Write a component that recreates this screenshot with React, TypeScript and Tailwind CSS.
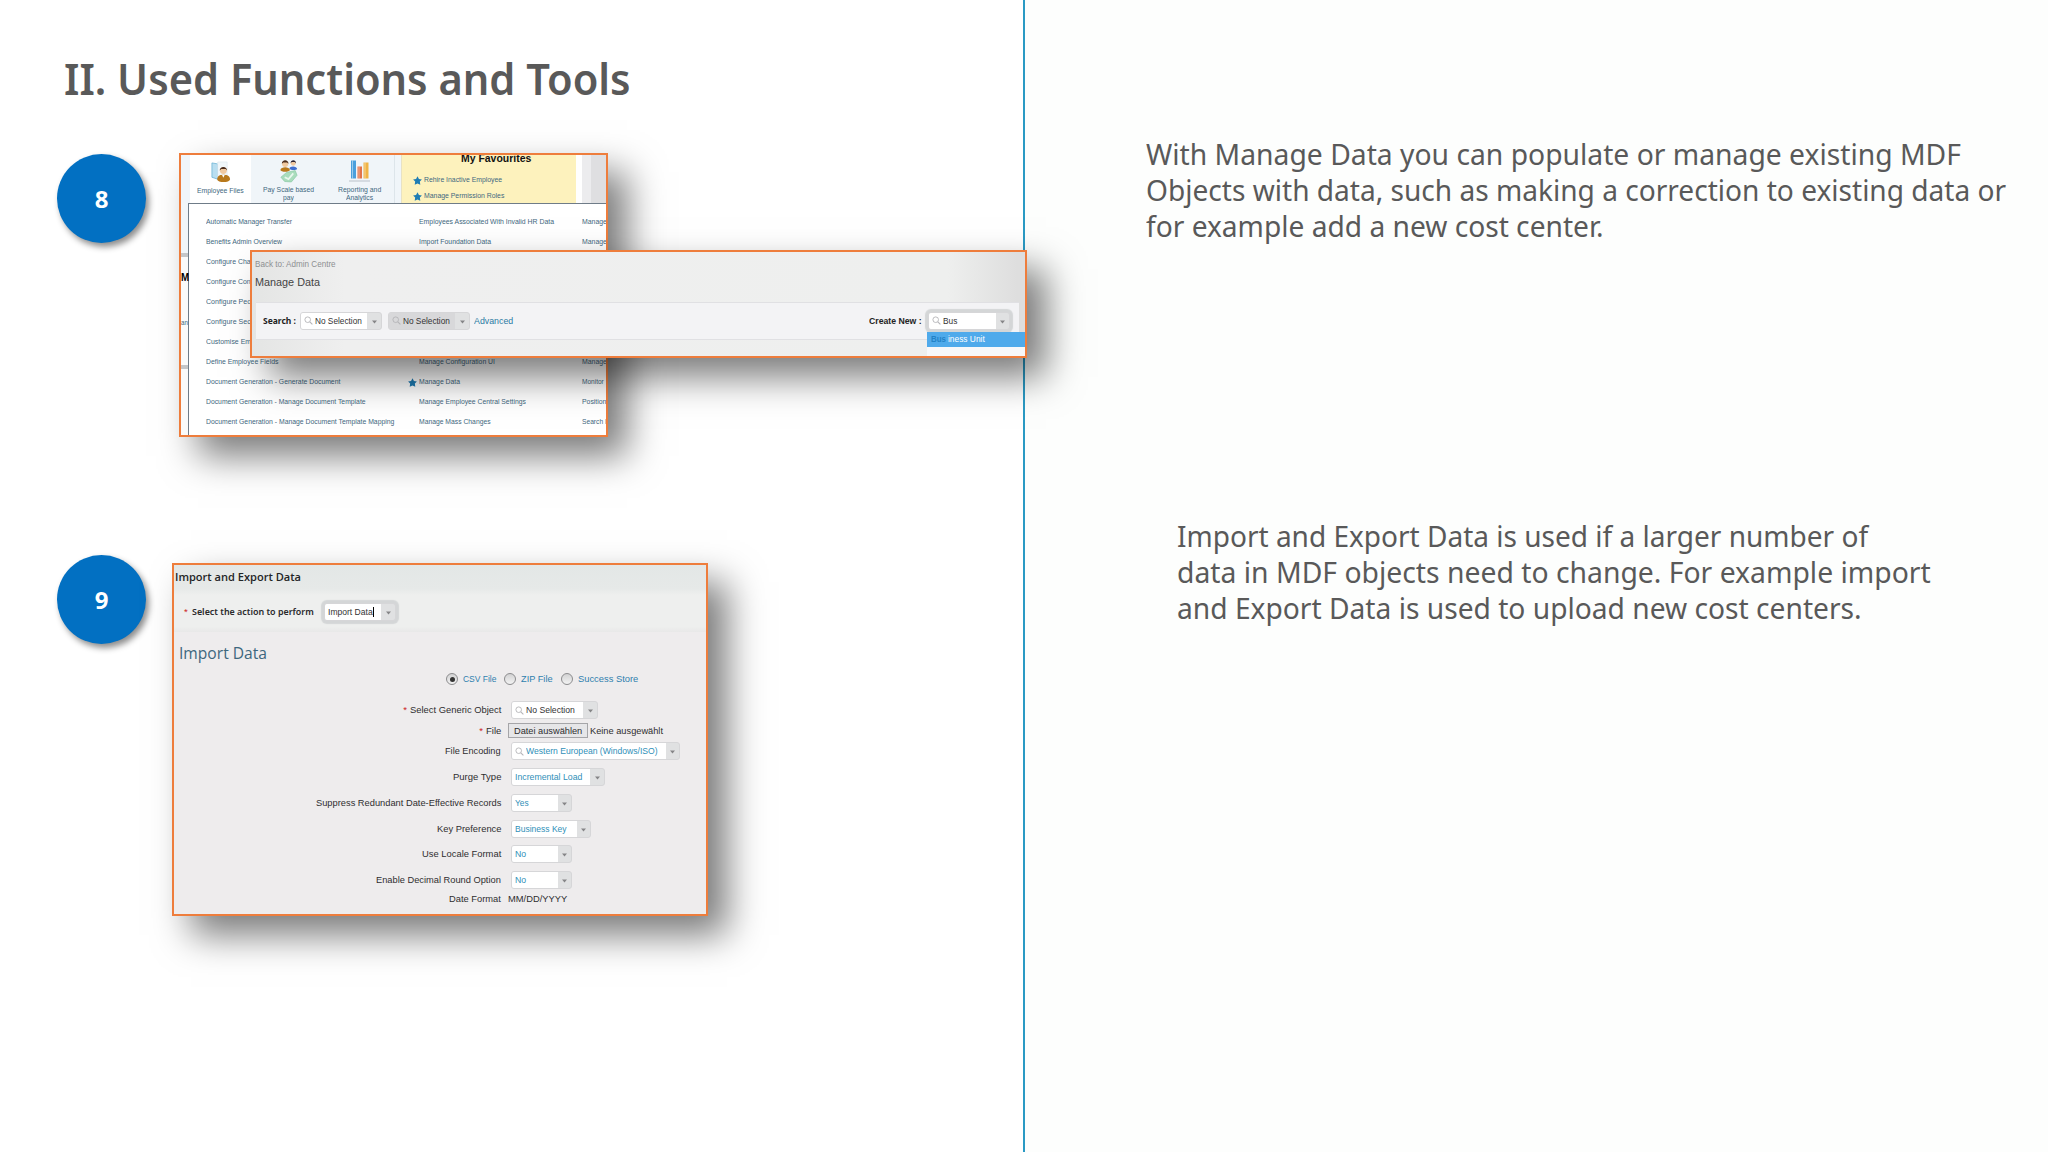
import { useLayoutEffect, useRef, useState, type ReactNode } from "react";
import { clsx } from "clsx";

/* One line of text whose glyphs are condensed or widened to fill w pixels. */
function Fit({ w, className, children }: { w: number; className?: string; children: ReactNode }) {
  const ref = useRef<HTMLSpanElement>(null);
  const [scale, setScale] = useState(1);
  useLayoutEffect(() => {
    if (ref.current) setScale(w / ref.current.offsetWidth);
  }, [w]);
  return (
    <span className={clsx("block shrink-0 whitespace-nowrap", className)} style={{ width: w }}>
      <span ref={ref} className="inline-block origin-left" style={{ transform: `scaleX(${scale})` }}>
        {children}
      </span>
    </span>
  );
}

const SHADOW = "shadow-[19px_19px_35px_rgba(0,0,0,0.52)]";

function Star({ className }: { className?: string }) {
  return (
    <svg viewBox="0 0 10 10" className={clsx("h-[9px] w-[9px] shrink-0", className)}>
      <path d="M5 .2 6.6 3.2 9.9 3.8 7.6 6.2 8.1 9.8 5 8.3 1.9 9.8 2.4 6.2.1 3.8 3.4 3.2Z" fill="#1f7db4" />
    </svg>
  );
}

function Magnifier() {
  return (
    <svg viewBox="0 0 9 9" className="h-[9px] w-[9px] shrink-0" fill="none" stroke="#b4b4b8">
      <circle cx="3.7" cy="3.7" r="2.8" strokeWidth=".9" />
      <path d="M5.8 5.8 8.4 8.4" strokeWidth="1.1" />
    </svg>
  );
}

function Badge({ n, className }: { n: string; className: string }) {
  return (
    <div
      className={clsx(
        "absolute left-[57px] flex h-[89px] w-[89px] items-center justify-center rounded-full bg-[#0270c2] text-[24px] font-bold text-white shadow-[3px_4px_6px_rgba(0,0,0,0.45)]",
        className,
      )}
    >
      {n}
    </div>
  );
}

function Select({
  text, textW, search, width, fieldW, gray, glow, color = "text-[#2f8fb8]", caret,
}: {
  text: string; textW: number; search?: boolean; width: number; fieldW: number;
  gray?: boolean; glow?: boolean; color?: string; caret?: boolean;
}) {
  return (
    <div
      className={clsx(
        "flex h-[18px] shrink-0 items-stretch overflow-hidden rounded-[3px] border border-[#d6d6d8] bg-[#e0e1e2]",
        glow && "shadow-[0_0_1px_3px_#d4d6d7]",
      )}
      style={{ width }}
    >
      <div
        className={clsx("flex items-center", search ? "gap-[2px] pl-[3px]" : "pl-[3px]", gray ? "bg-[#d8d8da]" : "bg-white")}
        style={{ width: fieldW }}
      >
        {search && <Magnifier />}
        <Fit w={textW} className={color}>{text}</Fit>
        {caret && <span className="h-[10px] w-px bg-black" />}
      </div>
      <div className="flex flex-1 items-center justify-center">
        <svg viewBox="0 0 6 4" className="mt-[2px] h-[4px] w-[5px]"><path d="M0 .3H6L3 3.8Z" fill="#858587" /></svg>
      </div>
    </div>
  );
}

type Cell = [string, number];
const MENU: { a: Cell; b?: Cell; star?: boolean; c?: Cell }[] = [
  { a: ["Automatic Manager Transfer", 86], b: ["Employees Associated With Invalid HR Data", 135], c: ["Manage", 25] },
  { a: ["Benefits Admin Overview", 76], b: ["Import Foundation Data", 72], c: ["Manage", 25] },
  { a: ["Configure Cha", 45] },
  { a: ["Configure Con", 45] },
  { a: ["Configure Peo", 45] },
  { a: ["Configure Sec", 45] },
  { a: ["Customise Em", 45] },
  { a: ["Define Employee Fields", 72], b: ["Manage Configuration UI", 76], c: ["Manage", 25] },
  { a: ["Document Generation - Generate Document", 134], b: ["Manage Data", 41], star: true, c: ["Monitor", 22] },
  { a: ["Document Generation - Manage Document Template", 160], b: ["Manage Employee Central Settings", 107], c: ["Position", 24] },
  { a: ["Document Generation - Manage Document Template Mapping", 188], b: ["Manage Mass Changes", 72], c: ["Search I", 25] },
];

function AdminPanel() {
  return (
    <div className={clsx("absolute left-[179px] top-[153px] h-[284px] w-[429px] bg-white", SHADOW)}>
      <div className="flex h-full flex-col overflow-hidden border-2 border-[#ee7d3c] font-['Liberation_Sans',sans-serif] text-[8px] leading-[10px] text-[#3f6880]">
        <div className="flex h-[48px] shrink-0 bg-[#f0f5f9]">
          <div className="ml-[9px] flex w-[61px] flex-col items-center bg-white pt-[6px]">
            <svg viewBox="0 0 22 23" className="h-[22px] w-[21px]">
              <path d="M2 2 8 3V19L2 17Z" fill="#b9def0" stroke="#5aa9cf" strokeWidth=".7" />
              <path d="M8 1H18V18H8Z" fill="#f1f7fa" stroke="#d8e6ed" strokeWidth=".6" />
              <circle cx="14" cy="10" r="3.6" fill="#f0c9a0" />
              <path d="M10.200 10C10 5 18 5 17.800 10L16.500 8.300H11.800Z" fill="#4a2c1c" />
              <path d="M7.500 19C8 15 11 14.500 14 14.500S20.500 15 21 19C20.500 23 8 23 7.500 19Z" fill="#b8791c" />
              <path d="M12.500 14.500H15.500L14 17.500Z" fill="#fff" />
            </svg>
            <Fit w={47} className="mt-[3px]">Employee Files</Fit>
          </div>
          <div className="flex w-[74px] flex-col items-center pt-[4px]">
            <svg viewBox="0 0 22 25" className="h-[24px] w-[21px]">
              <circle cx="7.500" cy="5" r="3.300" fill="#f0c9a0" />
              <path d="M4 5C4 0 11 0 11 5L9.500 3.500H5.500Z" fill="#4a2c1c" />
              <circle cx="16" cy="4.500" r="2.600" fill="#f0c9a0" />
              <path d="M13.200 4.500C13 0 19 0 18.800 4.500L17.500 3H14.500Z" fill="#2d2230" />
              <path d="M12 10C12 7 20 7 20 10.500C19 12 13 12 12 10Z" fill="#3f6fd0" />
              <path d="M2.500 11.500C3 7.500 12 7.500 12.500 11.500C12 14 3 14 2.500 11.500Z" fill="#b8791c" />
              <path d="M3 19 9 14 18 12 20 17 14 24 7 23.500Z" fill="#a9dcbc" stroke="#7cc49a" strokeWidth=".6" />
              <path d="M7 19 11 21 16 15" fill="none" stroke="#e9f7ee" strokeWidth="1.800" />
            </svg>
            <Fit w={51} className="mt-[3px] leading-[8px]">Pay Scale based</Fit>
            <Fit w={11} className="leading-[8px]">pay</Fit>
          </div>
          <div className="flex w-[70px] flex-col items-center border-r border-[#dde5ea] pt-[4px]">
            <svg viewBox="0 0 22 23" className="h-[24px] w-[22px]">
              <path d="M2 1H7V19H2Z" fill="#4aa0dd" />
              <path d="M8.500 7H13V19H8.500Z" fill="#e2744a" />
              <path d="M14.500 3H19.500V19H14.500Z" fill="#f0b445" />
              <path d="M3.500 1V19M10 7V19M16 3V19" stroke="#fff" strokeOpacity=".45" />
              <path d="M0 21.500H21" stroke="#c4cad0" strokeWidth="1.200" />
            </svg>
            <Fit w={43} className="mt-[3px] leading-[8px]">Reporting and</Fit>
            <Fit w={27} className="leading-[8px]">Analytics</Fit>
          </div>
          <div className="ml-[6px] w-[175px] border-l border-[#e8e2c4] bg-[#fdf2bd]">
            <Fit w={70} className="ml-[59px] mt-[-2px] text-[10px] font-bold leading-[12px] text-[#111]">My Favourites</Fit>
            <div className="ml-[11px] mt-[10px] flex items-center gap-[2px]"><Star /><Fit w={78}>Rehire Inactive Employee</Fit></div>
            <div className="ml-[11px] mt-[6px] flex items-center gap-[2px]"><Star /><Fit w={80}>Manage Permission Roles</Fit></div>
          </div>
          <div className="w-[6px] bg-white" />
          <div className="flex-1 border-l-[9px] border-[#ececee] bg-[#dfdfe1]" />
        </div>
        <div className="flex min-h-0 flex-1">
          <div className="w-[7px] shrink-0 bg-[#fafbfb]">
            <div className="h-[50px] bg-[#f1f6f9]" />
            <div className="h-[4px] bg-[#c4c6c8]" />
            <Fit w={8} className="mt-[14px] text-[11px] font-bold leading-[12px] text-black">M</Fit>
            <Fit w={7} className="mt-[35px] leading-[10px]">an</Fit>
            <div className="mt-[37px] h-[4px] bg-[#c4c6c8]" />
          </div>
          <div className="flex-1 border-l border-t border-[#6f7c88] bg-white pt-[8px]">
            {MENU.map((r, i) => (
              <div key={i} className="grid h-[20px] grid-cols-[204px_9px_163px_30px] items-center pl-[17px]">
                <Fit w={r.a[1]}>{r.a[0]}</Fit>
                <span className="-ml-[2px]">{r.star && <Star />}</span>
                {r.b ? <Fit w={r.b[1]}>{r.b[0]}</Fit> : <span />}
                {r.c && <Fit w={r.c[1]}>{r.c[0]}</Fit>}
              </div>
            ))}
          </div>
        </div>
      </div>
    </div>
  );
}

function ManageDataPanel() {
  return (
    <div className={clsx("absolute left-[250px] top-[250px] h-[108px] w-[777px]", SHADOW)}>
      <div className="flex h-full flex-col border-2 border-[#ee7d3c] bg-[linear-gradient(90deg,#e4e5e4,#efefef_12%,#eeefee_90%,#dedede_99%)] font-['Liberation_Sans',sans-serif] text-[9.5px] leading-[12px]">
        <Fit w={81} className="ml-[3px] mt-[6px] text-[#8d8f91]">Back to: Admin Centre</Fit>
        <Fit w={65} className="ml-[3px] mt-[5px] text-[11.5px] leading-[14px] text-[#444]">Manage Data</Fit>
        <div className="ml-[4px] mt-[13px] flex h-[38px] w-[763px] items-center border-y border-[#e0e0e3] bg-[#f3f3f5] pb-px pl-[7px]">
          <Fit w={33} className="font-['Noto_Sans',sans-serif] font-bold text-[#222]">Search :</Fit>
          <div className="ml-[4px]"><Select text="No Selection" textW={47} search width={82} fieldW={66} color="text-[#333]" /></div>
          <div className="ml-[6px]"><Select text="No Selection" textW={47} search width={82} fieldW={66} gray color="text-[#333]" /></div>
          <Fit w={39} className="ml-[4px] text-[#2b7ba4]">Advanced</Fit>
          <Fit w={53} className="ml-auto font-bold text-[#222]">Create New :</Fit>
          <div className="relative ml-[6px] mr-[9px]">
            <Select text="Bus" textW={14} search glow width={82} fieldW={67} color="text-[#333]" />
            <div className="absolute left-[-1px] top-[20px] h-[24px] w-[98px] bg-[#f7f8fa]">
              <div className="flex h-[15px] items-center bg-[#4faaeb] pl-[4px]">
                <Fit w={15} className="font-bold text-[#2382c6]">Bus</Fit>
                <Fit w={37} className="ml-[2px] text-white">iness Unit</Fit>
              </div>
            </div>
          </div>
        </div>
      </div>
    </div>
  );
}

function Radio({ on, text, w }: { on?: boolean; text: string; w: number }) {
  return (
    <div className="flex items-center gap-[5px]">
      <span className="flex h-[12px] w-[12px] items-center justify-center rounded-full border border-[#8c8c8e] bg-[linear-gradient(#d2d2d3,#f3f3f3)]">
        {on && <span className="h-[5px] w-[5px] rounded-full bg-[#333]" />}
      </span>
      <Fit w={w} className="text-[#2f7fae]">{text}</Fit>
    </div>
  );
}

function Row({ label, w, h, req, children }: { label: string; w: number; h: string; req?: boolean; children: ReactNode }) {
  return (
    <div className={clsx("flex shrink-0 items-center", h)}>
      <div className="flex w-[327px] justify-end gap-[3px] text-[#2e2e30]">
        {req && <span className="text-[#c22]">*</span>}
        <Fit w={w}>{label}</Fit>
      </div>
      {children}
    </div>
  );
}

function ImportPanel() {
  return (
    <div className={clsx("absolute left-[172px] top-[563px] h-[353px] w-[536px]", SHADOW)}>
      <div className="flex h-full flex-col border-2 border-[#ee7d3c] bg-[#eeeced] font-['Liberation_Sans',sans-serif] text-[9.5px] leading-[12px]">
        <div className="flex h-[67px] shrink-0 flex-col bg-[linear-gradient(#e3e7e6,#e6e9e8_35%,#eeefee_45%,#eeefee_92%,#e8e8e8)]">
          <Fit w={126} className="ml-[1px] mt-[4px] font-['Open_Sans',sans-serif] text-[11.5px] font-semibold leading-[16px] text-[#1f2526]">Import and Export Data</Fit>
          <div className="ml-[10px] mt-[18px] flex items-center">
            <span className="w-[8px] text-[#c22]">*</span>
            <Fit w={122} className="font-['Noto_Sans',sans-serif] font-semibold text-[#2a2a2c]">Select the action to perform</Fit>
            <div className="ml-[10px]"><Select text="Import Data" textW={45} glow caret width={72} fieldW={56} color="text-[#333]" /></div>
          </div>
        </div>
        <Fit w={88} className="ml-[5px] mt-[10px] font-['Open_Sans',sans-serif] text-[16.5px] leading-[22px] text-[#3d677e]">Import Data</Fit>
        <div className="ml-[272px] mt-[9px] flex h-[12px] gap-[8px]">
          <Radio on text="CSV File" w={33} />
          <Radio text="ZIP File" w={32} />
          <Radio text="Success Store" w={60} />
        </div>
        <div className="mt-[15px]">
          <Row label="Select Generic Object" w={91} h="h-[20px]" req><div className="ml-[10px]"><Select text="No Selection" textW={49} search width={87} fieldW={71} color="text-[#333]" /></div></Row>
          <Row label="File" w={15} h="h-[21px]" req>
            <div className="ml-[7px] flex h-[15px] w-[80px] items-center justify-center border border-[#a5a5a8] bg-[#e6e6e8]"><Fit w={68} className="text-[#2e2e30]">Datei auswählen</Fit></div>
            <Fit w={73} className="ml-[2px] text-[#2e2e30]">Keine ausgewählt</Fit>
          </Row>
          <Row label="File Encoding" w={56} h="h-[20px]"><div className="ml-[10px]"><Select text="Western European (Windows/ISO)" textW={132} search width={169} fieldW={154} /></div></Row>
          <div className="h-[3px]" />
          <Row label="Purge Type" w={48} h="h-[26px]"><div className="ml-[10px]"><Select text="Incremental Load" textW={67} width={94} fieldW={78} /></div></Row>
          <Row label="Suppress Redundant Date-Effective Records" w={185} h="h-[26px]"><div className="ml-[10px]"><Select text="Yes" textW={14} width={61} fieldW={46} /></div></Row>
          <Row label="Key Preference" w={64} h="h-[25px]"><div className="ml-[10px]"><Select text="Business Key" textW={52} width={80} fieldW={65} /></div></Row>
          <Row label="Use Locale Format" w={79} h="h-[26px]"><div className="ml-[10px]"><Select text="No" textW={11} width={61} fieldW={46} /></div></Row>
          <Row label="Enable Decimal Round Option" w={125} h="h-[26px]"><div className="ml-[10px]"><Select text="No" textW={11} width={61} fieldW={46} /></div></Row>
          <Row label="Date Format" w={52} h="h-[11px]"><Fit w={59} className="ml-[7px] text-[#2e2e30]">MM/DD/YYYY</Fit></Row>
        </div>
      </div>
    </div>
  );
}

export default function App() {
  return (
    <div className="relative grid h-[1152px] w-[2048px] grid-cols-[1023px_1025px] overflow-hidden bg-white font-['Noto_Sans','Open_Sans',sans-serif]">
      <main>
        <h1 className="ml-[64px] mt-[50px] text-[43px] font-semibold leading-[58px] text-[#595959]">
          <Fit w={567}>II. Used Functions and Tools</Fit>
        </h1>
        <Badge n="8" className="top-[154px]" />
        <AdminPanel />
        <Badge n="9" className="top-[555px]" />
        <ImportPanel />
      </main>
      <aside className="border-l-2 border-[#2a9ac4] bg-[#fdfefd] text-[29px] leading-[36px] text-[#595959]">
        <div className="ml-[121px] mt-[136px]">
          <Fit w={815}>With Manage Data you can populate or manage existing MDF</Fit>
          <Fit w={860}>Objects with data, such as making a correction to existing data or</Fit>
          <Fit w={458}>for example add a new cost center.</Fit>
        </div>
        <div className="ml-[152px] mt-[274px]">
          <Fit w={691}>Import and Export Data is used if a larger number of</Fit>
          <Fit w={754}>data in MDF objects need to change. For example import</Fit>
          <Fit w={685}>and Export Data is used to upload new cost centers.</Fit>
        </div>
      </aside>
      <ManageDataPanel />
    </div>
  );
}
